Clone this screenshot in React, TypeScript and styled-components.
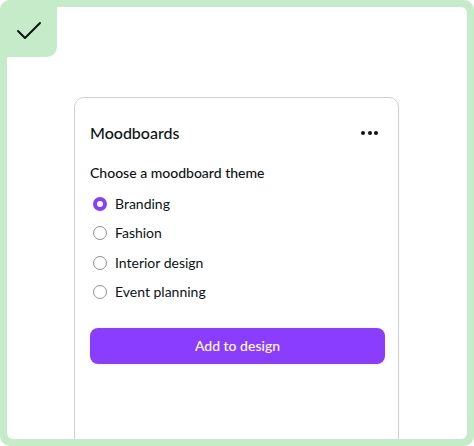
import React, { useState } from 'react';
import styled, { createGlobalStyle } from 'styled-components';

const Global = createGlobalStyle`
  html, body {
    margin: 0;
    padding: 0;
    background: #ffffff;
  }
  body {
    font-family: Lato, 'Noto Sans', sans-serif;
    color: #0d1216;
  }
`;

const Frame = styled.div`
  position: relative;
  width: 474px;
  height: 446px;
  box-sizing: border-box;
  padding: 7px;
  background: #c6ebc9;
  border-radius: 10px;
`;

const Canvas = styled.div`
  width: 100%;
  height: 100%;
  background: #ffffff;
  border-radius: 6px;
  overflow: hidden;
  padding: 90px 0 0 67px;
  box-sizing: border-box;
`;

const Badge = styled.div`
  position: absolute;
  top: 0;
  left: 0;
  width: 57px;
  height: 57px;
  background: #c6ebc9;
  border-radius: 10px 0 10px 0;
  display: flex;
  align-items: center;
  justify-content: center;
  svg {
    margin-top: 4px;
  }
`;

const Card = styled.div`
  width: 325px;
  height: 420px;
  box-sizing: border-box;
  border: 1px solid #cfcfd3;
  border-radius: 10px;
  padding: 23px 13px 0 15px;
  display: flex;
  flex-direction: column;
`;

const Header = styled.div`
  display: flex;
  align-items: center;
  justify-content: space-between;
  height: 24px;
`;

const Title = styled.h2`
  margin: 0;
  font-size: 16px;
  font-weight: 500;
  line-height: 24px;
`;

const More = styled.div`
  display: flex;
  gap: 2.5px;
  margin-right: 7px;
  span {
    width: 4px;
    height: 4px;
    border-radius: 50%;
    background: #0d1216;
  }
`;

const Subhead = styled.div`
  margin-top: 16px;
  font-size: 14px;
  font-weight: 500;
  line-height: 24px;
`;

const Options = styled.div`
  margin-top: 7px;
  display: flex;
  flex-direction: column;
  gap: 5.3px;
`;

const Option = styled.label`
  display: flex;
  align-items: center;
  gap: 8px;
  height: 24px;
  font-size: 14px;
  line-height: 24px;
  padding-left: 3px;
  cursor: pointer;
`;

const Dot = styled.span<{ $on: boolean }>`
  width: 14px;
  height: 14px;
  box-sizing: border-box;
  border-radius: 50%;
  border: ${(p) => (p.$on ? '4.5px solid #8b3dff' : '1.5px solid #8c9099')};
  background: #ffffff;
  flex-shrink: 0;
`;

const Button = styled.button`
  margin-top: 24px;
  height: 36px;
  width: 100%;
  border: none;
  border-radius: 8px;
  background: #8b3dff;
  color: #ffffff;
  font-family: Lato, 'Noto Sans', sans-serif;
  font-size: 14px;
  font-weight: 500;
  cursor: pointer;
`;

const themes = ['Branding', 'Fashion', 'Interior design', 'Event planning'];

const App = () => {
  const [picked, setPicked] = useState('Branding');
  return (
    <>
      <Global />
      <Frame>
        <Canvas>
          <Card>
            <Header>
              <Title>Moodboards</Title>
              <More>
                <span />
                <span />
                <span />
              </More>
            </Header>
            <Subhead>Choose a moodboard theme</Subhead>
            <Options>
              {themes.map((t) => (
                <Option key={t} onClick={() => setPicked(t)}>
                  <Dot $on={picked === t} />
                  {t}
                </Option>
              ))}
            </Options>
            <Button>Add to design</Button>
          </Card>
        </Canvas>
        <Badge>
          <svg width="26" height="20" viewBox="0 0 26 20" fill="none">
            <path d="M2 10 L9 17 L24 2" stroke="#0d1216" strokeWidth="2" strokeLinecap="round" strokeLinejoin="round" />
          </svg>
        </Badge>
      </Frame>
    </>
  );
};

export default App;
